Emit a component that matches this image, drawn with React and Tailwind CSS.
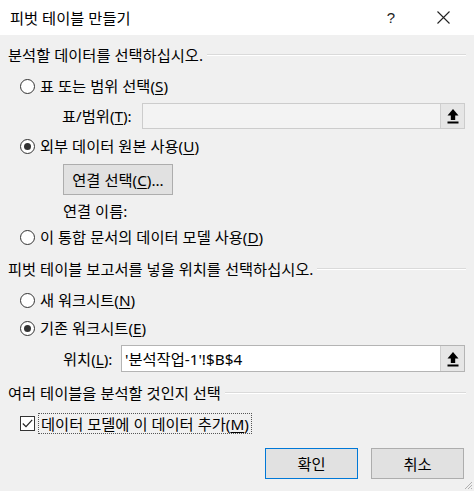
import React from "react";

const F = { fontFamily: '"Noto Sans", "Noto Sans CJK KR", sans-serif' };

function Radio({ checked }) {
  return (
    <span className="w-[15px] h-[15px] rounded-full border border-[#333333] bg-white flex items-center justify-center shrink-0">
      {checked && <span className="w-[7px] h-[7px] rounded-full bg-[#333333]" />}
    </span>
  );
}

function U({ children }) {
  return <span className="underline underline-offset-2">{children}</span>;
}

function UpIcon() {
  return (
    <svg width="12" height="16" viewBox="0 0 12 16">
      <polygon points="6,1 0.5,7.5 11.5,7.5" fill="#000" />
      <rect x="3.8" y="7" width="4.4" height="5" fill="#000" />
      <rect x="0.5" y="13.5" width="11" height="2" fill="#000" />
    </svg>
  );
}

function Heading({ children }) {
  return (
    <div className="h-[20px] flex items-center pl-[8px] pr-[8px] gap-[4px]">
      <span className="whitespace-nowrap">{children}</span>
      <span className="flex-1 h-px bg-[#dadada] border-b border-white box-content" />
    </div>
  );
}

export default function App() {
  return (
    <div
      className="w-[474px] h-[491px] bg-[#f0f0f0] flex flex-col text-[15.3px] leading-[20px] text-[#000000] overflow-hidden relative"
      style={F}
    >
      {/* Title bar */}
      <div className="h-[35px] bg-white flex items-center pl-[10px] shrink-0">
        <span>피벗 테이블 만들기</span>
        <span className="ml-auto mr-[42px] text-[15px] text-[#222]" style={{ fontFamily: '"Liberation Sans", sans-serif' }}>?</span>
        <svg width="13" height="13" viewBox="0 0 13 13" className="mr-[24px]">
          <path d="M0.5 0.5 L12.5 12.5 M12.5 0.5 L0.5 12.5" stroke="#222" strokeWidth="1.1" />
        </svg>
      </div>

      {/* Body */}
      <div className="flex flex-col">
        <div className="mt-[10px]">
          <Heading>분석할 데이터를 선택하십시오.</Heading>
        </div>

        <div className="mt-[11px] h-[20px] flex items-center pl-[20px] gap-[5px]">
          <Radio />
          <span>표 또는 범위 선택(<U>S</U>)</span>
        </div>

        <div className="mt-[7px] h-[26px] flex items-center">
          <span className="pl-[62px] w-[142px] shrink-0 whitespace-nowrap">표/범위(<U>T</U>):</span>
          <div className="w-[323px] h-[26px] border border-[#cccccc] bg-[#f3f3f3] flex justify-end">
            <div className="w-[24px] h-full bg-[#e6e6e6] border-l border-[#cfcfcf] flex items-center justify-center">
              <UpIcon />
            </div>
          </div>
        </div>

        <div className="mt-[7px] h-[20px] flex items-center pl-[20px] gap-[5px]">
          <Radio checked />
          <span>외부 데이터 원본 사용(<U>U</U>)</span>
        </div>

        <div className="mt-[8px] pl-[63px]">
          <div className="w-[110px] h-[31px] border border-[#adadad] bg-[#e1e1e1] flex items-center justify-center">
            <span className="whitespace-nowrap">연결 선택(<U>C</U>)...</span>
          </div>
        </div>

        <div className="mt-[6px] h-[20px] flex items-center pl-[63px]">
          <span>연결 이름:</span>
        </div>

        <div className="mt-[6px] h-[20px] flex items-center pl-[20px] gap-[5px]">
          <Radio />
          <span>이 통합 문서의 데이터 모델 사용(<U>D</U>)</span>
        </div>

        <div className="mt-[12px]">
          <Heading>피벗 테이블 보고서를 넣을 위치를 선택하십시오.</Heading>
        </div>

        <div className="mt-[11px] h-[20px] flex items-center pl-[20px] gap-[5px]">
          <Radio />
          <span>새 워크시트(<U>N</U>)</span>
        </div>

        <div className="mt-[8px] h-[20px] flex items-center pl-[20px] gap-[5px]">
          <Radio checked />
          <span>기존 워크시트(<U>E</U>)</span>
        </div>

        <div className="mt-[7px] h-[27px] flex items-center">
          <span className="pl-[63px] w-[121px] shrink-0 whitespace-nowrap">위치(<U>L</U>):</span>
          <div className="w-[344px] h-[27px] border border-[#b4b4b4] bg-white flex items-center">
            <span className="pl-[3px] flex-1">'분석작업-1'!$B$4</span>
            <div className="w-[24px] h-full bg-[#e6e6e6] border-l border-[#cfcfcf] flex items-center justify-center">
              <UpIcon />
            </div>
          </div>
        </div>

        <div className="mt-[11px]">
          <Heading>여러 테이블을 분석할 것인지 선택</Heading>
        </div>

        <div className="mt-[10px] h-[21px] flex items-center pl-[20px] gap-[3px]">
          <span className="w-[15px] h-[15px] border border-[#333333] bg-white flex items-center justify-center shrink-0">
            <svg width="11" height="9" viewBox="0 0 11 9">
              <path d="M0.8 4.5 L4 7.6 L10.2 0.8" fill="none" stroke="#222" strokeWidth="1.2" />
            </svg>
          </span>
          <span className="h-[21px] flex items-center px-[2px] border border-dotted border-[#555] whitespace-nowrap">
            데이터 모델에 이 데이터 추가(<U>M</U>)
          </span>
        </div>

        <div className="mt-[14px] flex justify-end pr-[10px] gap-[13px]">
          <div className="w-[93px] h-[31px] border border-[#0078d7] bg-[#e1e1e1] flex items-center justify-center">
            확인
          </div>
          <div className="w-[93px] h-[31px] border border-[#adadad] bg-[#e1e1e1] flex items-center justify-center">
            취소
          </div>
        </div>
      </div>

      {/* resize grip */}
      <svg width="10" height="10" viewBox="0 0 10 10" className="absolute right-[1px] bottom-[1px]">
        <path d="M9 2 L2 9 M9 5 L5 9 M9 8 L8 9" stroke="#b0b0b0" strokeWidth="1" />
      </svg>
    </div>
  );
}
